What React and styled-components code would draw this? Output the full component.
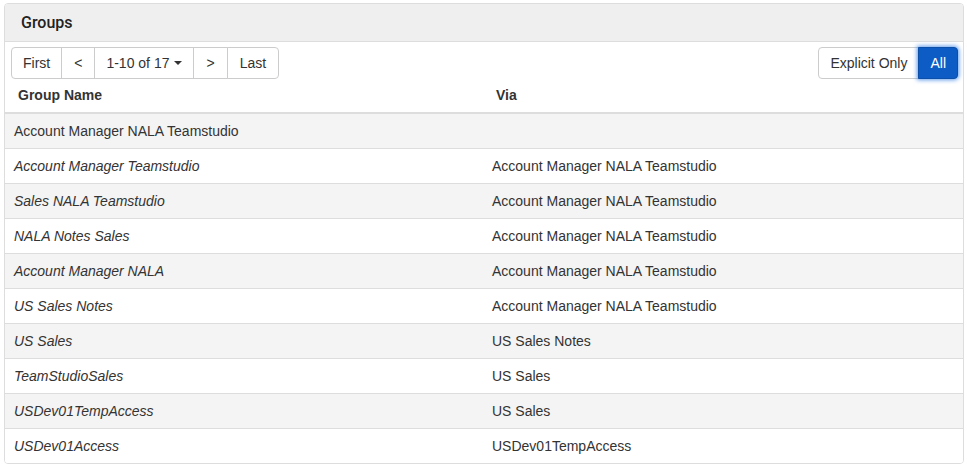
import React from 'react';
import styled, { createGlobalStyle } from 'styled-components';

const GlobalStyle = createGlobalStyle`
  body {
    margin: 0;
    background: #fff;
    font-family: "Liberation Sans", Arial, sans-serif;
    font-size: 14px;
    color: #333;
  }
`

const Page = styled.div`
  padding: 3px 3px 0 4px;
`
const Panel = styled.div`
  border: 1px solid #ddd;
  border-radius: 4px;
  background: #fff;
  overflow: hidden;
`
const PanelHeading = styled.div`
  background: #efefef;
  border-bottom: 1px solid #ddd;
  padding: 10px 16px;
  font-family: Roboto, "Liberation Sans", Arial, sans-serif;
  font-weight: 500;
  font-size: 16px;
  line-height: 17px;
  color: #222;
`
const Toolbar = styled.div`
  display: flex;
  justify-content: space-between;
  padding: 5px 5px 0 6px;
`
const BtnGroup = styled.div`
  display: flex;
`
const Btn = styled.button`
  font-family: "Liberation Sans", Arial, sans-serif;
  font-size: 14px;
  line-height: 18px;
  padding: 6px ${p => (p.wide ? 12 : 11)}px;
  margin-left: -1px;
  border: 1px solid ${p => (p.active ? '#0b4fa9' : '#ccc')};
  background: ${p => (p.active ? '#0d5cc6' : '#fff')};
  color: ${p => (p.active ? '#fff' : '#333')};
  box-shadow: ${p => (p.active ? '0 0 4px 1px rgba(40, 120, 230, 0.75)' : 'none')};
  position: ${p => (p.active ? 'relative' : 'static')};
  border-radius: 0;
  cursor: pointer;
  display: flex;
  align-items: center;
  &:first-child {
    margin-left: 0;
    border-radius: 4px 0 0 4px;
  }
  &:last-child {
    border-radius: 0 4px 4px 0;
  }
`
const Caret = styled.span`
  display: inline-block;
  width: 0;
  height: 0;
  margin-left: 5px;
  border-top: 4px solid #333;
  border-left: 4px solid transparent;
  border-right: 4px solid transparent;
`
const Table = styled.table`
  width: 100%;
  border-collapse: separate;
  border-spacing: 0;
  table-layout: fixed;
`
const Th = styled.th`
  text-align: left;
  font-weight: bold;
  padding: 8px 13px;
  line-height: 17px;
  border-bottom: 2px solid #ddd;
  &:last-child {
    padding-left: 12px;
  }
`
const Row = styled.tr`
  background: ${p => (p.striped ? '#f4f4f4' : '#fff')};
`
const Td = styled.td`
  padding: 8px 9px;
  line-height: 18px;
  border-bottom: 1px solid #ddd;
  font-style: ${p => (p.italic ? 'italic' : 'normal')};
  tr:last-child > & {
    border-bottom: none;
  }
  &:last-child {
    padding-left: 8px;
  }
`

const rows = [
  { name: 'Account Manager NALA Teamstudio', via: '', explicit: true },
  { name: 'Account Manager Teamstudio', via: 'Account Manager NALA Teamstudio' },
  { name: 'Sales NALA Teamstudio', via: 'Account Manager NALA Teamstudio' },
  { name: 'NALA Notes Sales', via: 'Account Manager NALA Teamstudio' },
  { name: 'Account Manager NALA', via: 'Account Manager NALA Teamstudio' },
  { name: 'US Sales Notes', via: 'Account Manager NALA Teamstudio' },
  { name: 'US Sales', via: 'US Sales Notes' },
  { name: 'TeamStudioSales', via: 'US Sales' },
  { name: 'USDev01TempAccess', via: 'US Sales' },
  { name: 'USDev01Access', via: 'USDev01TempAccess' },
]

const App = () => {
  return (
    <Page>
      <GlobalStyle />
      <Panel>
        <PanelHeading>Groups</PanelHeading>
        <Toolbar>
          <BtnGroup>
            <Btn>First</Btn>
            <Btn wide>&lt;</Btn>
            <Btn>1-10 of 17<Caret /></Btn>
            <Btn wide>&gt;</Btn>
            <Btn wide>Last</Btn>
          </BtnGroup>
          <BtnGroup>
            <Btn>Explicit Only</Btn>
            <Btn active>All</Btn>
          </BtnGroup>
        </Toolbar>
        <Table>
          <thead>
            <tr>
              <Th>Group Name</Th>
              <Th>Via</Th>
            </tr>
          </thead>
          <tbody>
            {rows.map((row, index) => (
              <Row key={index} striped={index % 2 === 0}>
                <Td italic={!row.explicit}>{row.name}</Td>
                <Td>{row.via}</Td>
              </Row>
            ))}
          </tbody>
        </Table>
      </Panel>
    </Page>
  )
}

export default App
